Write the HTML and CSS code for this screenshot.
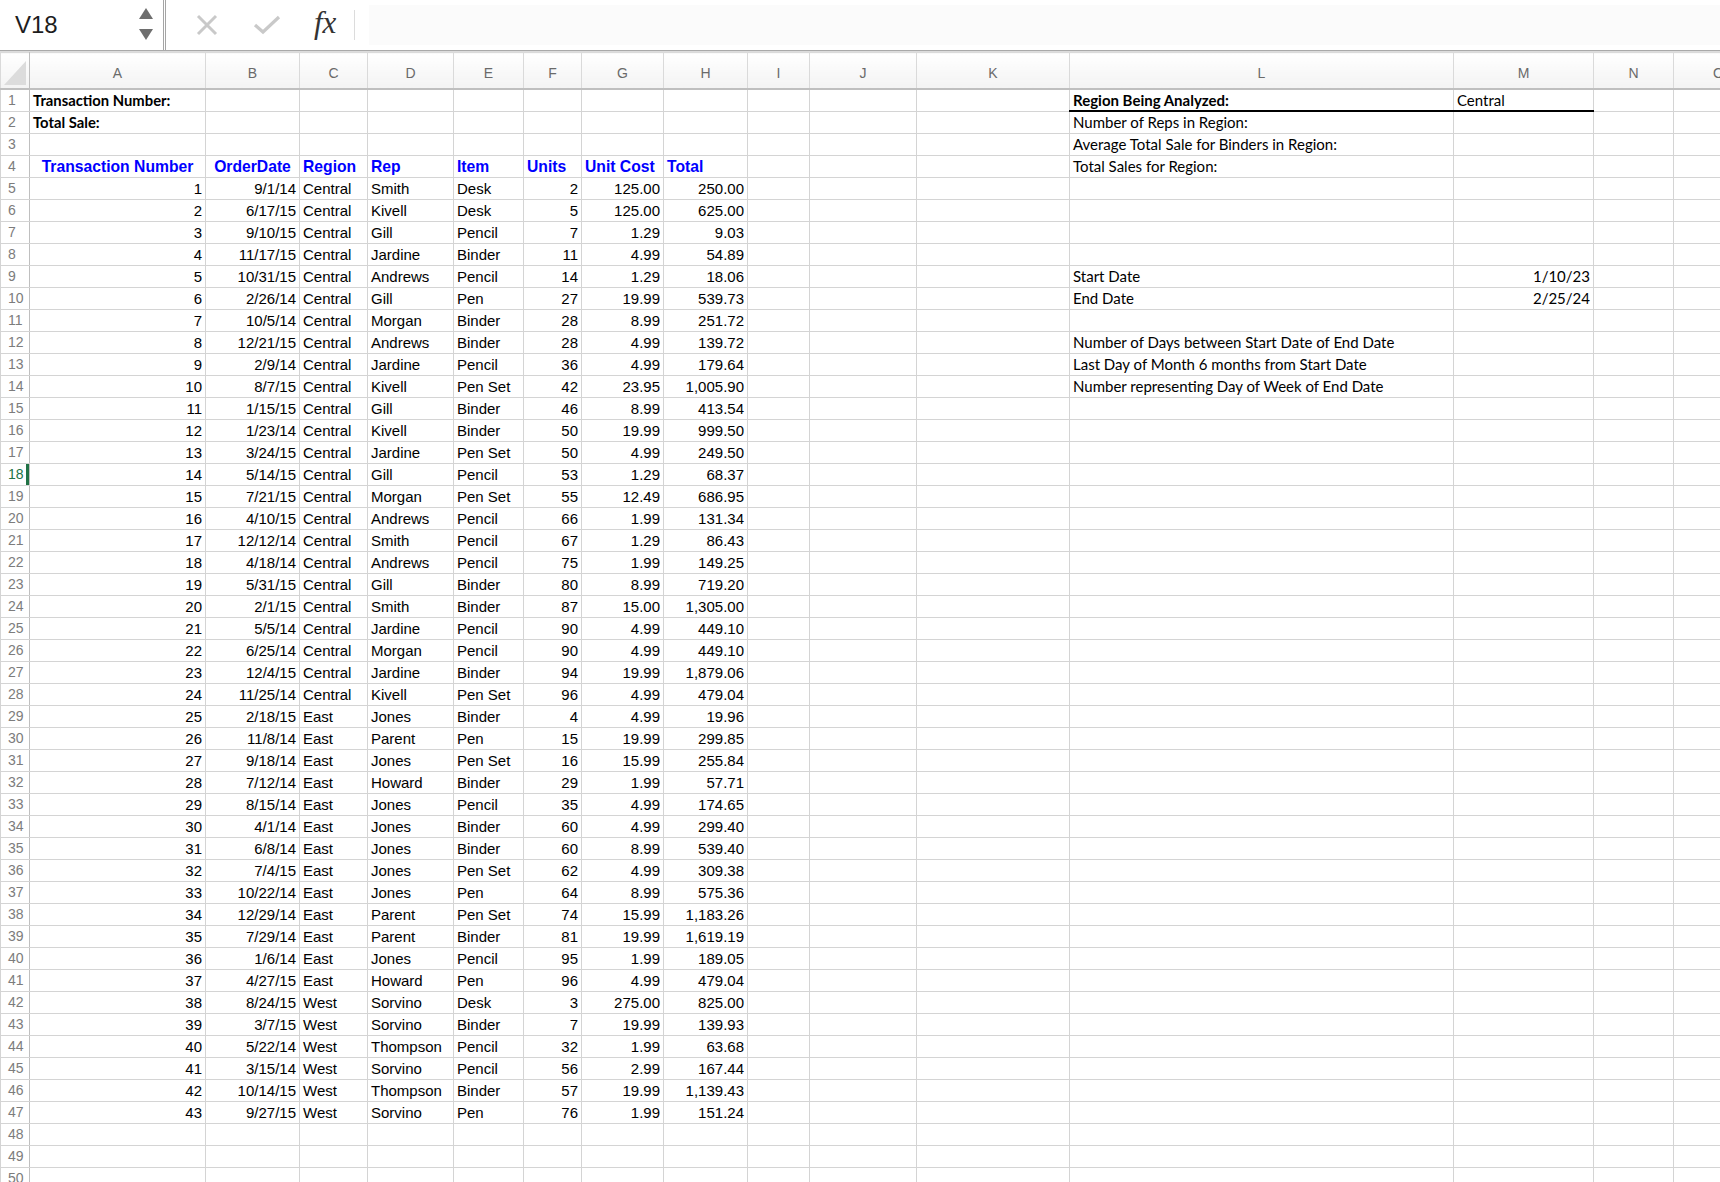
FILE: index.html
```html
<!DOCTYPE html>
<html lang="en">
<head>
  <meta charset="UTF-8">
  <title>Sales Workbook</title>
  <link rel="stylesheet" href="styles.css">
</head>
<body>

<div class="toolbar">
  <div class="namebox">
    <span class="ref">V18</span>
    <div class="spin">
      <svg width="14" height="11" viewBox="0 0 14 11"><polygon points="7,0 14,11 0,11" fill="#6e6e6e"/></svg>
      <svg width="14" height="11" viewBox="0 0 14 11"><polygon points="0,0 14,0 7,11" fill="#6e6e6e"/></svg>
    </div>
  </div>
  <svg class="icon-x" width="22" height="22" viewBox="0 0 22 22">
    <path d="M2 2 L20 20 M20 2 L2 20" stroke="#c9c9c9" stroke-width="3" fill="none"/>
  </svg>
  <svg class="icon-ok" width="28" height="20" viewBox="0 0 28 20">
    <path d="M2 10 L10 17 L26 2" stroke="#c9c9c9" stroke-width="3.2" fill="none"/>
  </svg>
  <span class="fx">fx</span>
  <span class="fsep"></span>
  <div class="formula"></div>
</div>

<div class="sheet">
  <table class="grid" id="grid">
    <colgroup>
      <col style="width:29px"><col style="width:176px"><col style="width:94px"><col style="width:68px">
      <col style="width:86px"><col style="width:70px"><col style="width:58px"><col style="width:82px">
      <col style="width:84px"><col style="width:62px"><col style="width:107px"><col style="width:153px">
      <col style="width:384px"><col style="width:140px"><col style="width:80px"><col style="width:90px">
    </colgroup>
    <thead>
      <tr>
        <th class="corner"><svg width="22" height="24" viewBox="0 0 22 24"><polygon points="0,24 22,24 22,0" fill="#dcdcdc"/></svg></th>
        <th>A</th><th>B</th><th>C</th><th>D</th><th>E</th><th>F</th><th>G</th>
        <th>H</th><th>I</th><th>J</th><th>K</th><th>L</th><th>M</th><th>N</th><th>O</th>
      </tr>
    </thead>
    <tbody id="rows"></tbody>
  </table>
</div>

<script>
  const orders = [
    [1,'9/1/14','Central','Smith','Desk',2,'125.00','250.00'],
    [2,'6/17/15','Central','Kivell','Desk',5,'125.00','625.00'],
    [3,'9/10/15','Central','Gill','Pencil',7,'1.29','9.03'],
    [4,'11/17/15','Central','Jardine','Binder',11,'4.99','54.89'],
    [5,'10/31/15','Central','Andrews','Pencil',14,'1.29','18.06'],
    [6,'2/26/14','Central','Gill','Pen',27,'19.99','539.73'],
    [7,'10/5/14','Central','Morgan','Binder',28,'8.99','251.72'],
    [8,'12/21/15','Central','Andrews','Binder',28,'4.99','139.72'],
    [9,'2/9/14','Central','Jardine','Pencil',36,'4.99','179.64'],
    [10,'8/7/15','Central','Kivell','Pen Set',42,'23.95','1,005.90'],
    [11,'1/15/15','Central','Gill','Binder',46,'8.99','413.54'],
    [12,'1/23/14','Central','Kivell','Binder',50,'19.99','999.50'],
    [13,'3/24/15','Central','Jardine','Pen Set',50,'4.99','249.50'],
    [14,'5/14/15','Central','Gill','Pencil',53,'1.29','68.37'],
    [15,'7/21/15','Central','Morgan','Pen Set',55,'12.49','686.95'],
    [16,'4/10/15','Central','Andrews','Pencil',66,'1.99','131.34'],
    [17,'12/12/14','Central','Smith','Pencil',67,'1.29','86.43'],
    [18,'4/18/14','Central','Andrews','Pencil',75,'1.99','149.25'],
    [19,'5/31/15','Central','Gill','Binder',80,'8.99','719.20'],
    [20,'2/1/15','Central','Smith','Binder',87,'15.00','1,305.00'],
    [21,'5/5/14','Central','Jardine','Pencil',90,'4.99','449.10'],
    [22,'6/25/14','Central','Morgan','Pencil',90,'4.99','449.10'],
    [23,'12/4/15','Central','Jardine','Binder',94,'19.99','1,879.06'],
    [24,'11/25/14','Central','Kivell','Pen Set',96,'4.99','479.04'],
    [25,'2/18/15','East','Jones','Binder',4,'4.99','19.96'],
    [26,'11/8/14','East','Parent','Pen',15,'19.99','299.85'],
    [27,'9/18/14','East','Jones','Pen Set',16,'15.99','255.84'],
    [28,'7/12/14','East','Howard','Binder',29,'1.99','57.71'],
    [29,'8/15/14','East','Jones','Pencil',35,'4.99','174.65'],
    [30,'4/1/14','East','Jones','Binder',60,'4.99','299.40'],
    [31,'6/8/14','East','Jones','Binder',60,'8.99','539.40'],
    [32,'7/4/15','East','Jones','Pen Set',62,'4.99','309.38'],
    [33,'10/22/14','East','Jones','Pen',64,'8.99','575.36'],
    [34,'12/29/14','East','Parent','Pen Set',74,'15.99','1,183.26'],
    [35,'7/29/14','East','Parent','Binder',81,'19.99','1,619.19'],
    [36,'1/6/14','East','Jones','Pencil',95,'1.99','189.05'],
    [37,'4/27/15','East','Howard','Pen',96,'4.99','479.04'],
    [38,'8/24/15','West','Sorvino','Desk',3,'275.00','825.00'],
    [39,'3/7/15','West','Sorvino','Binder',7,'19.99','139.93'],
    [40,'5/22/14','West','Thompson','Pencil',32,'1.99','63.68'],
    [41,'3/15/14','West','Sorvino','Pencil',56,'2.99','167.44'],
    [42,'10/14/15','West','Thompson','Binder',57,'19.99','1,139.43'],
    [43,'9/27/15','West','Sorvino','Pen',76,'1.99','151.24']
  ];

  // analysis block in columns L and M
  const side = {
    1: ['Region Being Analyzed:', 'Central'],
    2: ['Number of Reps in Region:', ''],
    3: ['Average Total Sale for Binders in Region:', ''],
    4: ['Total Sales for Region:', ''],
    9: ['Start Date', '1/10/23'],
    10: ['End Date', '2/25/24'],
    12: ['Number of Days between Start Date of End Date', ''],
    13: ['Last Day of Month 6 months from Start Date', ''],
    14: ['Number representing Day of Week of End Date', '']
  };

  const headers = ['Transaction Number','OrderDate','Region','Rep','Item','Units','Unit Cost','Total'];
  const align = ['num','num','','','','num','num','num'];

  function cell(tr, text, cls) {
    const td = document.createElement('td');
    td.textContent = text;
    if (cls) td.className = cls;
    tr.appendChild(td);
  }

  const body = document.getElementById('rows');

  for (let r = 1; r <= 50; r++) {
    const tr = document.createElement('tr');
    const rh = document.createElement('td');
    rh.className = r === 18 ? 'rh active' : 'rh';
    rh.textContent = r;
    tr.appendChild(rh);

    for (let c = 0; c < 8; c++) {
      if (r === 1 && c === 0) cell(tr, 'Transaction Number:', 'label');
      else if (r === 2 && c === 0) cell(tr, 'Total Sale:', 'label');
      else if (r === 4) cell(tr, headers[c], c < 2 ? 'head ctr' : 'head');
      else if (r >= 5 && r - 5 < orders.length) cell(tr, orders[r - 5][c], align[c]);
      else cell(tr, '');
    }

    cell(tr, ''); cell(tr, ''); cell(tr, '');

    const s = side[r];
    if (s) {
      cell(tr, s[0], r === 1 ? 'cal bold line' : 'cal');
      cell(tr, s[1], r === 1 ? 'cal line' : 'cal num');
    } else {
      cell(tr, ''); cell(tr, '');
    }
    cell(tr, ''); cell(tr, '');
    body.appendChild(tr);
  }
</script>

</body>
</html>
```

FILE: styles.css
```css
body {
  margin: 0;
  font-family: "Liberation Sans", Arial, sans-serif;
  background: #fff;
  width: 1720px;
  height: 1182px;
  overflow: hidden;
}

.toolbar {
  display: flex;
  align-items: center;
  height: 50px;
  border-bottom: 1px solid #a9a9a9;
}

.namebox {
  width: 166px;
  height: 50px;
  box-sizing: border-box;
  padding: 0 10px 0 15px;
  display: flex;
  align-items: center;
  justify-content: space-between;
  border-right: 3px double #a5a5a5;
}

.ref {
  font-size: 24px;
  color: #1d1d1d;
}

.spin {
  display: flex;
  flex-direction: column;
  gap: 10px;
  padding-bottom: 2px;
}

.spin svg {
  display: block;
}

.icon-x {
  margin-left: 30px;
}

.icon-ok {
  margin-left: 35px;
}

.fx {
  margin-left: 33px;
  font-family: "Liberation Serif", serif;
  font-style: italic;
  font-size: 31px;
  color: #333;
  padding-bottom: 4px;
}

.fsep {
  width: 1px;
  height: 30px;
  background: #dcdcdc;
  margin-left: 18px;
}

.formula {
  flex: 1;
  height: 40px;
  margin-left: 14px;
  background: #fbfbfb;
}

.sheet {
  border-top: 1px solid #dcdcdc;
  overflow: hidden;
}

.grid {
  border-collapse: collapse;
  table-layout: fixed;
  width: 1763px;
}

.grid thead th {
  height: 30px;
  padding: 5px 0 0;
  background: linear-gradient(#ffffff, #f3f3f3);
  border: 1px solid #dadada;
  border-bottom: 2px solid #bfbfbf;
  font-weight: normal;
  font-size: 14px;
  color: #6a6a6a;
}

.grid thead th.corner {
  text-align: left;
  padding: 0 0 0 3px;
  height: 35px;
  border-right: 1px solid #bfbfbf;
}

.corner svg {
  display: block;
  margin-top: 4px;
}

.grid tbody tr {
  height: 22px;
}

.grid td {
  padding: 0 3px;
  border: 1px solid #d4d4d4;
  font-size: 15px;
  line-height: 19px;
  color: #000;
  white-space: nowrap;
  overflow: hidden;
}

.grid td.rh {
  padding-left: 7px;
  font-size: 14px;
  color: #7c7c7c;
  border-right: 1px solid #bfbfbf;
}

.grid td.rh.active {
  color: #217346;
  box-shadow: inset -3px 0 0 #217346;
}

.grid td.label {
  font-family: "Lato", sans-serif;
  font-weight: bold;
  font-size: 14.8px;
}

.grid td.head {
  color: #0000ff;
  font-weight: bold;
  font-size: 15.7px;
}

.ctr {
  text-align: center;
}

.num {
  text-align: right;
}

.grid td.cal {
  font-family: "Lato", sans-serif;
  font-size: 15px;
}

.grid td.bold {
  font-weight: bold;
}

.grid td.line {
  border-bottom: 2px solid #000;
}
```
